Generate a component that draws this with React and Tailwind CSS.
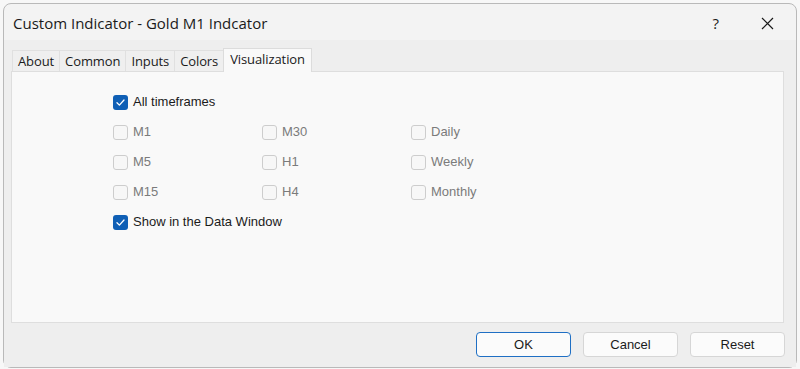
import { useState } from "react";

const tabs = ["About", "Common", "Inputs", "Colors", "Visualization"];

const grid = [
  ["M1", "M30", "Daily"],
  ["M5", "H1", "Weekly"],
  ["M15", "H4", "Monthly"],
];

const CheckBox = ({ checked, disabled, label }) => (
  <label className="flex items-center gap-[5px] h-[20px]">
    {checked ? (
      <span className="flex h-[15px] w-[15px] items-center justify-center rounded-[3px] bg-[#0f5fb5]">
        <svg width="11" height="11" viewBox="0 0 11 11">
          <path d="M2 5.8 L4.4 8.1 L9 3" fill="none" stroke="#fff" strokeWidth="1.3" strokeLinecap="round" strokeLinejoin="round" />
        </svg>
      </span>
    ) : (
      <span className="h-[15px] w-[15px] rounded-[3px] border border-[#cdcdcd] bg-[#f7f7f7]" />
    )}
    <span className={disabled ? "text-[#7b7b7b]" : "text-[#1b1b1b]"}>{label}</span>
  </label>
);

export default function App() {
  const [active] = useState("Visualization");

  return (
    <div className="h-[369px] w-[800px] bg-[#f7f7f7] pl-[3px] pt-[3px] font-['Liberation_Sans',Arial,sans-serif] text-[13px]">
      <div className="flex h-[365px] w-[794px] flex-col rounded-[8px] border border-[#b9b9b9] bg-[#f3f3f3]">
        <div className="flex h-[36px] items-center justify-between pl-[9px] pr-[22px]">
          <span className="pt-[2px] font-['Open_Sans',sans-serif] text-[15px] text-[#1a1a1a]">
            Custom Indicator - Gold M1 Indcator
          </span>
          <div className="flex items-center gap-[42px] pt-[2px] text-[#1a1a1a]">
            <span className="font-['Open_Sans',sans-serif] text-[15px]">?</span>
            <svg width="13" height="13" viewBox="0 0 13 13">
              <path d="M1 1 L12 12 M12 1 L1 12" stroke="#1a1a1a" strokeWidth="1.2" />
            </svg>
          </div>
        </div>

        <div className="flex-1 bg-[#eeeeee] pt-[8px]">
          <div className="flex items-end pl-[8px] font-['Open_Sans',sans-serif] text-[13px] tracking-[-0.1px]">
            {tabs.map((t) =>
              t === active ? (
                <div
                  key={t}
                  className="relative z-10 -mb-px h-[24px] border border-b-0 border-[#dcdcdc] bg-[#f9f9f9] px-[6px] pt-[1px] text-[#1a1a1a]"
                >
                  {t}
                </div>
              ) : (
                <div
                  key={t}
                  className="h-[21px] border border-b-0 border-r-0 border-[#e0e0e0] bg-[#efefef] px-[5px] pt-[1px] text-[#1a1a1a] leading-[18px]"
                >
                  {t}
                </div>
              )
            )}
          </div>

          <div className="ml-[7px] h-[252px] w-[773px] border border-[#dedede] bg-[#f9f9f9] pl-[101px] pt-[20px]">
            <CheckBox checked label="All timeframes" />
            <div className="mt-[10px] flex flex-col gap-[10px]">
              {grid.map((row, i) => (
                <div key={i} className="grid grid-cols-[149px_149px_149px]">
                  {row.map((c) => (
                    <CheckBox key={c} disabled label={c} />
                  ))}
                </div>
              ))}
            </div>
            <div className="mt-[10px]">
              <CheckBox checked label="Show in the Data Window" />
            </div>
          </div>

          <div className="mt-[9px] flex justify-end gap-[12px] pr-[11px]">
            <button className="h-[25px] w-[95px] rounded-[4px] border border-[#1f6fc4] bg-[#fbfbfb] text-[#1a1a1a]">
              OK
            </button>
            <button className="h-[25px] w-[95px] rounded-[4px] border border-[#d6d6d6] bg-[#fbfbfb] text-[#1a1a1a]">
              Cancel
            </button>
            <button className="h-[25px] w-[95px] rounded-[4px] border border-[#d6d6d6] bg-[#fbfbfb] text-[#1a1a1a]">
              Reset
            </button>
          </div>
        </div>
      </div>
    </div>
  );
}
